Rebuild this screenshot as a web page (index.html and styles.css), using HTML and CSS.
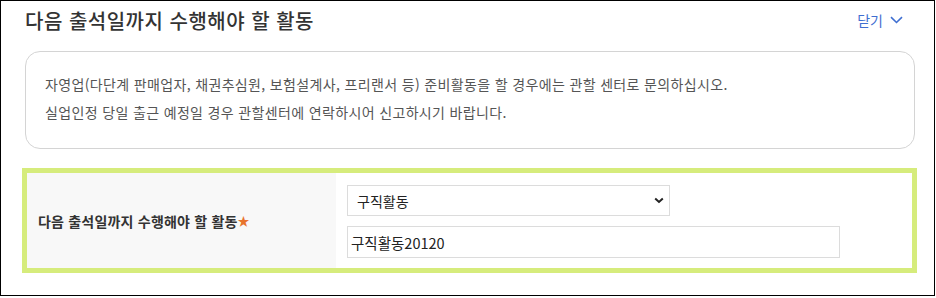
FILE: index.html
```html
<!DOCTYPE html>
<html lang="ko">
<head>
<meta charset="utf-8">
<link rel="stylesheet" href="styles.css">
</head>
<body>
<div class="frame">
  <div class="header">
    <h2 class="title">다음 출석일까지 수행해야 할 활동</h2>
    <a class="close">닫기
      <svg class="chev" width="13" height="8" viewBox="0 0 13 8"><path d="M1 1.2 L6.5 6.5 L12 1.2" fill="none" stroke="#3f6fd1" stroke-width="1.6"/></svg>
    </a>
  </div>
  <div class="notice">
    <p>자영업(다단계 판매업자, 채권추심원, 보험설계사, 프리랜서 등) 준비활동을 할 경우에는 관할 센터로 문의하십시오.</p>
    <p>실업인정 당일 출근 예정일 경우 관할센터에 연락하시어 신고하시기 바랍니다.</p>
  </div>
  <div class="formbox">
    <div class="label">다음 출석일까지 수행해야 할 활동<span class="star">★</span></div>
    <div class="field">
      <div class="select">
        <span>구직활동</span>
        <svg width="10" height="7" viewBox="0 0 10 7"><path d="M1.2 1.5 L5 5 L8.8 1.5" fill="none" stroke="#222" stroke-width="2"/></svg>
      </div>
      <div class="input">구직활동20120</div>
    </div>
  </div>
</div>
</body>
</html>
```

FILE: styles.css
```css
html, body {
  margin: 0;
  padding: 0;
  background: #fff;
}
body {
  font-family: "Noto Sans CJK KR", "Noto Sans", sans-serif;
  color: #333;
}
.frame {
  box-sizing: border-box;
  width: 935px;
  height: 296px;
  border: 1px solid #000;
  padding: 0 17px 0 21px;
}
.header {
  display: flex;
  align-items: center;
  justify-content: space-between;
  height: 38px;
  padding: 0 14px 0 3px;
}
.title {
  margin: 0;
  font-size: 20px;
  font-weight: 500;
  color: #333;
  letter-spacing: 0.5px;
}
.close {
  display: flex;
  align-items: center;
  gap: 7px;
  font-size: 14px;
  color: #3f6fd1;
}
.notice {
  box-sizing: border-box;
  margin: 12px 2px 0 3px;
  height: 98px;
  border: 1px solid #d4d4d4;
  border-radius: 15px;
  padding: 18px 0 0 19px;
}
.notice p {
  margin: 0;
  font-size: 14px;
  line-height: 28px;
  letter-spacing: 0.35px;
  color: #555;
}
.formbox {
  box-sizing: border-box;
  margin-top: 19px;
  height: 105px;
  border: 5px solid #d6ec7c;
  display: flex;
}
.label {
  width: 309px;
  background: #f8f8f8;
  display: flex;
  align-items: center;
  padding-left: 11px;
  box-sizing: border-box;
  font-size: 14px;
  font-weight: 700;
  letter-spacing: 0.2px;
  color: #333;
}
.star {
  color: #e8742c;
  font-size: 12px;
}
.field {
  flex: 1;
  padding: 12px 0 0 11px;
  display: flex;
  flex-direction: column;
  gap: 10px;
}
.select {
  box-sizing: border-box;
  width: 323px;
  height: 31px;
  border: 1px solid #dcdcdc;
  display: flex;
  align-items: center;
  justify-content: space-between;
  padding: 0 5px 0 9px;
  font-size: 14px;
  color: #222;
}
.input {
  box-sizing: border-box;
  width: 493px;
  height: 32px;
  border: 1px solid #dcdcdc;
  display: flex;
  align-items: center;
  padding-left: 3px;
  font-size: 14.5px;
  color: #222;
}
```
